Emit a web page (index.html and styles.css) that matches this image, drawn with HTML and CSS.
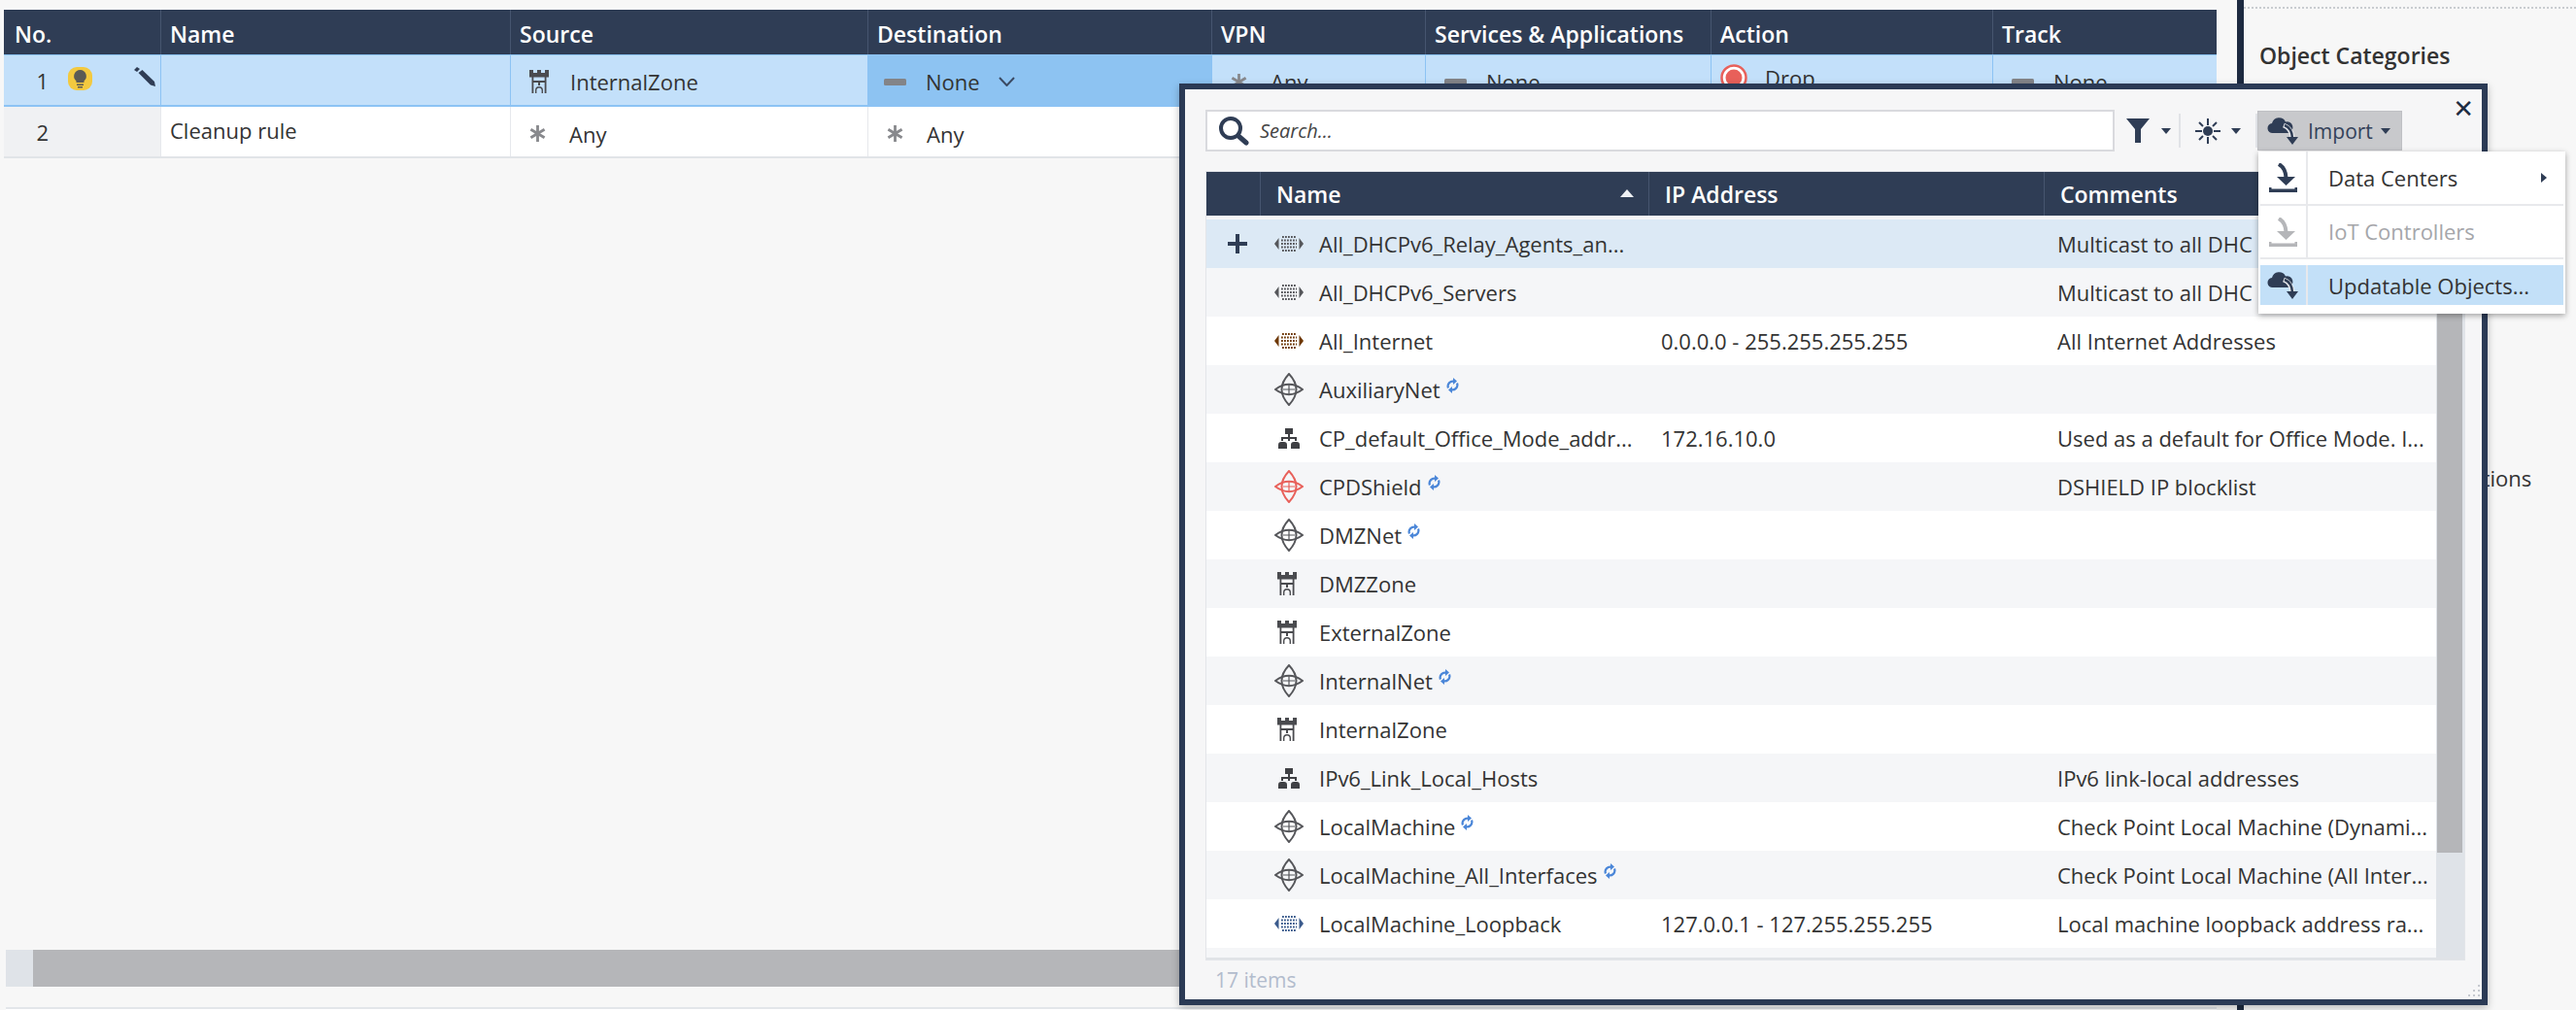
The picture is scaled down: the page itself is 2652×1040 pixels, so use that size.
FILE: index.html
```html
<!DOCTYPE html>
<html lang="en">
  <head>
    <meta charset="UTF-8" />
    <title>Access Control Policy</title>
    <link rel="stylesheet" href="styles.css">
  </head>
  <body>
    <!-- icon set -->
    <svg class="sprites" width="0" height="0">
      <symbol id="i-zone" viewBox="0 0 20 24">
        <path fill="currentColor" d="M0 0h4v3h4V0h4v3h4V0h4v7.500H0z" />
        <path fill="currentColor" d="M2.500 7h1.800v17H2.500zM15.700 7h1.800v17h-1.800zM2.500 11h15v2H2.500zM9 13h2v3H9z" />
        <path fill="none" stroke="currentColor" stroke-width="1.400" d="M6.700 24v-3a3.300 3.300 0 0 1 6.600 0v3" />
      </symbol>
      <symbol id="i-any" viewBox="0 0 18 20">
        <path fill="none" stroke="currentColor" stroke-width="3" d="M9 1v18M1.500 5.500l15 9M16.500 5.500l-15 9" />
      </symbol>
      <symbol id="i-none" viewBox="0 0 23 7">
        <rect width="23" height="7" rx="1.500" fill="currentColor" />
      </symbol>
      <symbol id="i-net" viewBox="0 0 30 34">
        <g fill="none" stroke="currentColor" stroke-width="1.900">
          <path d="M1 17Q15 6.500 29 17Q15 27.500 1 17Z" />
          <path d="M15 1Q30 17 15 33Q0 17 15 1Z" />
          <path d="M15 12v10M9 17h12" stroke-width="1.200" />
        </g>
      </symbol>
      <symbol id="i-multi" viewBox="0 0 30 16">
        <path fill="currentColor" d="M0 8l4.500-6v12zM30 8l-4.500-6v12z" />
        <path fill="none" stroke="currentColor" stroke-width="2" stroke-dasharray="1.800 1.200" d="M8 1h14M7 4.500h16M7 8h16M7 11.500h16M8 15h14" />
      </symbol>
      <symbol id="i-group" viewBox="0 0 22 21">
        <path fill="currentColor" d="M7 0h8v6h-3v3h7v4h-2v-2H5v2H3V9h7V6H7zM10 9h2v4h-2z" />
        <path fill="currentColor" d="M0 21v-4a3 3 0 0 1 3-3h3a3 3 0 0 1 3 3v4zM13 21v-4a3 3 0 0 1 3-3h3a3 3 0 0 1 3 3v4z" />
      </symbol>
      <symbol id="i-sync" viewBox="0 0 13 16">
        <g fill="none" stroke="currentColor" stroke-width="2.200">
          <path d="M2 10.500A5 5 0 0 1 8.500 4" />
          <path d="M11 5.500A5 5 0 0 1 4.500 12" />
        </g>
        <path fill="currentColor" d="M7 0l4 3.600L7 7zM6 9l-4 3.400L6 16z" />
      </symbol>
      <symbol id="i-cloud" viewBox="0 0 33 30">
        <path fill="currentColor" d="M6 17a5 5 0 0 1-1-10a7.500 7.500 0 0 1 14-1.500a5.500 5.500 0 0 1 3 11.500z" />
        <path fill="none" stroke="#e8e9ec" stroke-width="5" d="M17 9q8 3 9 13" />
        <path fill="none" stroke="currentColor" stroke-width="2.500" d="M18 9q7.500 3 8 13" />
        <path fill="currentColor" d="M20 21h12l-6 8z" />
      </symbol>
      <symbol id="i-download" viewBox="0 0 29 30">
        <path fill="none" stroke="currentColor" stroke-width="4" d="M10 1q7 4 7.500 14" />
        <path fill="currentColor" d="M8 14h19l-9.500 9zM0 25h2.500v1.500H26.500V25H29v5H0z" />
      </symbol>
      <symbol id="i-funnel" viewBox="0 0 24 25">
        <path fill="currentColor" d="M0 0h24L15 11v14H9V11z" />
      </symbol>
      <symbol id="i-star" viewBox="0 0 26 26">
        <circle cx="13" cy="13" r="5" fill="currentColor" />
        <path fill="none" stroke="currentColor" stroke-width="2" d="M13 0v7M13 19v7M0 13h7M19 13h7M4 4l4 4M18 18l4 4M22 4l-4 4M8 18l-4 4" />
      </symbol>
      <symbol id="i-search" viewBox="0 0 31 30">
        <circle cx="12" cy="12" r="10" fill="none" stroke="currentColor" stroke-width="4" />
        <path stroke="currentColor" stroke-width="5" stroke-linecap="round" d="M20 20l8 7" />
      </symbol>
      <symbol id="i-bulb" viewBox="0 0 25 24">
        <rect width="25" height="24" rx="9" fill="#f3c93f" />
        <path fill="#5a5a55" d="M12.500 3a6.500 6.500 0 0 0-4 11.500V16h8v-1.500a6.500 6.500 0 0 0-4-11.500z" />
        <path fill="#5a5a55" d="M9 17.500h7v1.500H9zM10 20h5v1.500h-5z" />
      </symbol>
      <symbol id="i-pencil" viewBox="0 0 22 20">
        <path fill="#2f3d55" d="M0 3L3 0l3 2-3 3zM4.500 6l4-3L21 15l1 5-5-1.500z" />
      </symbol>
      <symbol id="i-drop" viewBox="0 0 28 28">
        <circle cx="14" cy="14" r="12.500" fill="#fff" stroke="#e8605a" stroke-width="2.500" />
        <circle cx="14" cy="14" r="8.500" fill="#e8605a" />
      </symbol>
    </svg>

    <div class="page">
      <main class="policy">
        <div class="rules">
          <div class="rule-row rule-head">
            <div class="cell">No.</div>
            <div class="cell">Name</div>
            <div class="cell">Source</div>
            <div class="cell">Destination</div>
            <div class="cell">VPN</div>
            <div class="cell">Services &amp; Applications</div>
            <div class="cell">Action</div>
            <div class="cell">Track</div>
          </div>
          <div class="rule-row rule-selected">
            <div class="cell cell-no">
              <span class="no-val">1</span>
              <svg class="ic-bulb"><use href="#i-bulb" /></svg>
              <svg class="ic-pencil"><use href="#i-pencil" /></svg>
            </div>
            <div class="cell"></div>
            <div class="cell"><svg class="ic-zone"><use href="#i-zone" /></svg>InternalZone</div>
            <div class="cell cell-active">
              <svg class="ic-none"><use href="#i-none" /></svg>None
              <svg class="ic-chevron" viewBox="0 0 17 10"><path d="M1 1l7.500 8L16 1" /></svg>
            </div>
            <div class="cell"><svg class="ic-any"><use href="#i-any" /></svg>Any</div>
            <div class="cell"><svg class="ic-none"><use href="#i-none" /></svg>None</div>
            <div class="cell cell-raised"><svg class="ic-drop"><use href="#i-drop" /></svg>Drop</div>
            <div class="cell"><svg class="ic-none"><use href="#i-none" /></svg>None</div>
          </div>
          <div class="rule-row rule-plain">
            <div class="cell cell-no cell-grey"><span class="no-val">2</span></div>
            <div class="cell cell-raised">Cleanup rule</div>
            <div class="cell"><svg class="ic-any"><use href="#i-any" /></svg>Any</div>
            <div class="cell"><svg class="ic-any"><use href="#i-any" /></svg>Any</div>
            <div class="cell"></div>
            <div class="cell"></div>
            <div class="cell"></div>
            <div class="cell"></div>
          </div>
        </div>
        <div class="h-scroll"><div class="h-thumb"></div></div>
        <div class="bottom-panel"></div>
      </main>

      <div class="divider"></div>

      <aside class="side">
        <h2 class="side-title">Object Categories</h2>
        <div class="side-item">ctions</div>
      </aside>
    </div>

    <!-- object picker -->
    <section class="picker">
      <span class="picker-close">✕</span>
      <div class="toolbar">
        <div class="search">
          <svg class="ic-search"><use href="#i-search" /></svg>
          <span class="search-text">Search...</span>
        </div>
        <svg class="ic-funnel"><use href="#i-funnel" /></svg>
        <span class="caret caret-funnel"></span>
        <span class="tool-sep sep-funnel"></span>
        <svg class="ic-star"><use href="#i-star" /></svg>
        <span class="caret caret-star"></span>
        <span class="tool-sep sep-star"></span>
        <div class="import">
          <svg class="ic-cloud"><use href="#i-cloud" /></svg>
          <span class="import-label">Import</span>
          <span class="caret caret-import"></span>
          <div class="menu">
            <div class="menu-item">
              <span class="menu-icon"><svg class="ic-download"><use href="#i-download" /></svg></span>
              <span class="menu-label">Data Centers</span>
              <span class="menu-arrow"></span>
            </div>
            <div class="menu-item menu-disabled">
              <span class="menu-icon"><svg class="ic-download"><use href="#i-download" /></svg></span>
              <span class="menu-label">IoT Controllers</span>
            </div>
            <div class="menu-item menu-hover">
              <span class="menu-icon"><svg class="ic-cloud"><use href="#i-cloud" /></svg></span>
              <span class="menu-label">Updatable Objects...</span>
            </div>
          </div>
        </div>
      </div>

      <div class="objects">
        <div class="obj-row obj-head">
          <div class="obj-cell"></div>
          <div class="obj-cell obj-name-head">Name<span class="sort-up"></span></div>
          <div class="obj-cell">IP Address</div>
          <div class="obj-cell obj-comments-head">Comments</div>
        </div>
        <div class="obj-body">
          <div class="obj-rows">
            <div class="obj-row row-hover">
              <div class="obj-add"><svg class="ic-plus" viewBox="0 0 20 20"><path d="M8 0h4v8h8v4h-8v8H8v-8H0V8h8z" /></svg></div>
              <div class="obj-name"><span class="obj-icon"><svg class="ic-multi"><use href="#i-multi" /></svg></span>All_DHCPv6_Relay_Agents_an...</div>
              <div class="obj-ip"></div>
              <div class="obj-note">Multicast to all DHC</div>
            </div>
            <div class="obj-row">
              <div class="obj-add"></div>
              <div class="obj-name"><span class="obj-icon"><svg class="ic-multi"><use href="#i-multi" /></svg></span>All_DHCPv6_Servers</div>
              <div class="obj-ip"></div>
              <div class="obj-note">Multicast to all DHC</div>
            </div>
            <div class="obj-row">
              <div class="obj-add"></div>
              <div class="obj-name"><span class="obj-icon"><svg class="ic-multi ic-brown"><use href="#i-multi" /></svg></span>All_Internet</div>
              <div class="obj-ip">0.0.0.0 - 255.255.255.255</div>
              <div class="obj-note">All Internet Addresses</div>
            </div>
            <div class="obj-row">
              <div class="obj-add"></div>
              <div class="obj-name"><span class="obj-icon"><svg class="ic-net"><use href="#i-net" /></svg></span>AuxiliaryNet<svg class="ic-sync"><use href="#i-sync" /></svg></div>
              <div class="obj-ip"></div>
              <div class="obj-note"></div>
            </div>
            <div class="obj-row">
              <div class="obj-add"></div>
              <div class="obj-name"><span class="obj-icon"><svg class="ic-group"><use href="#i-group" /></svg></span>CP_default_Office_Mode_addr...</div>
              <div class="obj-ip">172.16.10.0</div>
              <div class="obj-note">Used as a default for Office Mode. I...</div>
            </div>
            <div class="obj-row">
              <div class="obj-add"></div>
              <div class="obj-name"><span class="obj-icon"><svg class="ic-net ic-red"><use href="#i-net" /></svg></span>CPDShield<svg class="ic-sync"><use href="#i-sync" /></svg></div>
              <div class="obj-ip"></div>
              <div class="obj-note">DSHIELD IP blocklist</div>
            </div>
            <div class="obj-row">
              <div class="obj-add"></div>
              <div class="obj-name"><span class="obj-icon"><svg class="ic-net"><use href="#i-net" /></svg></span>DMZNet<svg class="ic-sync"><use href="#i-sync" /></svg></div>
              <div class="obj-ip"></div>
              <div class="obj-note"></div>
            </div>
            <div class="obj-row">
              <div class="obj-add"></div>
              <div class="obj-name"><span class="obj-icon"><svg class="ic-zone"><use href="#i-zone" /></svg></span>DMZZone</div>
              <div class="obj-ip"></div>
              <div class="obj-note"></div>
            </div>
            <div class="obj-row">
              <div class="obj-add"></div>
              <div class="obj-name"><span class="obj-icon"><svg class="ic-zone"><use href="#i-zone" /></svg></span>ExternalZone</div>
              <div class="obj-ip"></div>
              <div class="obj-note"></div>
            </div>
            <div class="obj-row">
              <div class="obj-add"></div>
              <div class="obj-name"><span class="obj-icon"><svg class="ic-net"><use href="#i-net" /></svg></span>InternalNet<svg class="ic-sync"><use href="#i-sync" /></svg></div>
              <div class="obj-ip"></div>
              <div class="obj-note"></div>
            </div>
            <div class="obj-row">
              <div class="obj-add"></div>
              <div class="obj-name"><span class="obj-icon"><svg class="ic-zone"><use href="#i-zone" /></svg></span>InternalZone</div>
              <div class="obj-ip"></div>
              <div class="obj-note"></div>
            </div>
            <div class="obj-row">
              <div class="obj-add"></div>
              <div class="obj-name"><span class="obj-icon"><svg class="ic-group"><use href="#i-group" /></svg></span>IPv6_Link_Local_Hosts</div>
              <div class="obj-ip"></div>
              <div class="obj-note">IPv6 link-local addresses</div>
            </div>
            <div class="obj-row">
              <div class="obj-add"></div>
              <div class="obj-name"><span class="obj-icon"><svg class="ic-net"><use href="#i-net" /></svg></span>LocalMachine<svg class="ic-sync"><use href="#i-sync" /></svg></div>
              <div class="obj-ip"></div>
              <div class="obj-note">Check Point Local Machine (Dynami...</div>
            </div>
            <div class="obj-row">
              <div class="obj-add"></div>
              <div class="obj-name"><span class="obj-icon"><svg class="ic-net"><use href="#i-net" /></svg></span>LocalMachine_All_Interfaces<svg class="ic-sync"><use href="#i-sync" /></svg></div>
              <div class="obj-ip"></div>
              <div class="obj-note">Check Point Local Machine (All Inter...</div>
            </div>
            <div class="obj-row">
              <div class="obj-add"></div>
              <div class="obj-name"><span class="obj-icon"><svg class="ic-multi ic-blue"><use href="#i-multi" /></svg></span>LocalMachine_Loopback</div>
              <div class="obj-ip">127.0.0.1 - 127.255.255.255</div>
              <div class="obj-note">Local machine loopback address ra...</div>
            </div>
            <div class="obj-row obj-cut">
              <div class="obj-add"></div>
              <div class="obj-name"><span class="obj-icon"><svg class="ic-zone"><use href="#i-zone" /></svg></span></div>
              <div class="obj-ip"></div>
              <div class="obj-note"></div>
            </div>
          </div>
          <div class="v-scroll"><div class="v-thumb"></div></div>
        </div>
      </div>
      <div class="picker-foot">17 items</div>
      <svg class="grip" viewBox="0 0 15 15"><path d="M12 1h2v2h-2zM7 6h2v2H7zM12 6h2v2h-2zM2 11h2v2H2zM7 11h2v2H7zM12 11h2v2h-2z" /></svg>
    </section>
  </body>
</html>
```

FILE: styles.css
```css
* {
  box-sizing: border-box;
}

html,
body {
  margin: 0;
  height: 100%;
}

body {
  position: relative;
  width: 2652px;
  height: 1040px;
  overflow: hidden;
  background-color: #f7f7f7;
  color: #333;
  font-family: "Open Sans", "Noto Sans", sans-serif;
  font-size: 22px;
}

svg {
  display: block;
  flex: none;
}

.sprites {
  position: absolute;
}

.page {
  display: flex;
  height: 1040px;
}

/* 左侧规则表 */
.policy {
  display: flex;
  flex-direction: column;
  width: 2303px;
  padding: 8px 21px 0 4px;
}

.rules {
  border-top: 2px solid #fff;
}

.rule-row {
  display: grid;
  grid-template-columns: 161px 360px 368px 354px 220px 294px 290px 231px;
  height: 53px;
  background-color: #fff;
  border-bottom: 2px solid #e1e4e8;
}

.rule-row .cell {
  display: flex;
  align-items: center;
  padding-left: 10px;
  border-left: 1px solid #e6e8ec;
  white-space: nowrap;
}

.rule-row .cell:first-child {
  border-left: 0;
}

.rule-head {
  height: 46px;
  background-color: #2f3d55;
  color: #fff;
  font-weight: 600;
  font-size: 23px;
  border-bottom: 0;
}

.rule-head .cell {
  padding-top: 3px;
  padding-left: 9px;
  border-left-color: #46556f;
}

.rule-head .cell:first-child {
  padding-left: 11px;
}

.rule-selected {
  height: 54px;
  background-color: #c3e0fa;
  border-bottom: 2px solid #8cc3f4;
  border-top: 1px solid #8cc3f4;
}

.rule-selected .cell {
  border-left-color: #8cc3f4;
  padding-top: 3px;
  padding-left: 19px;
}

.rule-selected .cell-active {
  background-color: #8dc3f2;
  padding-left: 16px;
}

.rule-selected .cell-no {
  padding-left: 0;
  padding-top: 0;
}

.rule-selected .cell-raised {
  padding-top: 0;
  padding-bottom: 6px;
  padding-left: 9px;
}

.rule-plain .cell {
  padding-top: 4px;
  padding-left: 19px;
}

.rule-plain .cell-no {
  padding-top: 0;
  padding-left: 0;
}

.rule-plain .cell-raised {
  padding-top: 0;
  padding-left: 9px;
  padding-bottom: 3px;
}

.cell-grey {
  background-color: #f0f1f3;
}

.no-val {
  width: 66px;
  padding-right: 20px;
  text-align: right;
}

.cell-no .ic-bulb {
  width: 25px;
  height: 24px;
  margin-top: -4px;
}

.cell-no .ic-pencil {
  width: 22px;
  height: 20px;
  margin-left: 43px;
  margin-top: -8px;
}

.ic-zone {
  width: 20px;
  height: 24px;
  color: #4a4b4f;
  margin-right: 22px;
}

.ic-any {
  width: 17px;
  height: 19px;
  color: #88898d;
  margin-right: 24px;
}

.ic-none {
  width: 23px;
  height: 7px;
  color: #838488;
  margin-right: 20px;
}

.ic-chevron {
  width: 17px;
  height: 10px;
  margin-left: 19px;
  fill: none;
  stroke: #3b4a63;
  stroke-width: 2;
}

.ic-drop {
  width: 28px;
  height: 28px;
  margin-right: 18px;
}

/* 底部滚动条 */
.h-scroll {
  display: flex;
  height: 38px;
  margin-top: auto;
  margin-left: 2px;
  margin-right: -2px;
  background-color: #dfe3e8;
}

.h-thumb {
  flex: 1;
  margin-left: 28px;
  background-color: #b5b6b9;
}

.bottom-panel {
  height: 3px;
  margin-top: 21px;
  margin-left: 2px;
  background-color: #fff;
  border-top: 2px solid #e3e6ea;
}

.divider {
  width: 7px;
  background-color: #1d2a40;
}

/* 右侧面板 */
.side {
  flex: 1;
  margin-top: 7px;
  padding: 0 0 0 16px;
  border-top: 2px dotted #c9ccd0;
}

.side-title {
  margin: 32px 0 0;
  font-size: 23px;
  font-weight: 600;
}

.side-item {
  margin-top: 404px;
  padding-left: 219px;
  white-space: nowrap;
}

/* 对象选择弹窗 */
.picker {
  position: absolute;
  left: 1214px;
  top: 86px;
  width: 1347px;
  height: 949px;
  padding: 21px 26px 0 21px;
  background-color: #f6f6f7;
  border: 6px solid #2b3a55;
  box-shadow: 0 3px 8px rgba(0, 0, 0, 0.25);
}

.picker-close {
  position: absolute;
  right: 8px;
  top: 8px;
  color: #1f2c42;
  font-family: "DejaVu Sans", sans-serif;
  font-size: 26px;
  font-weight: 700;
  line-height: 24px;
}

.toolbar {
  display: flex;
  align-items: center;
  height: 43px;
}

.search {
  display: flex;
  align-items: center;
  width: 936px;
  height: 43px;
  padding-left: 12px;
  background-color: #fff;
  border: 2px solid #d9dade;
}

.ic-search {
  width: 31px;
  height: 30px;
  color: #2f3d55;
  margin-right: 11px;
}

.search-text {
  font-size: 20px;
  font-style: italic;
  color: #444;
}

.ic-funnel {
  width: 24px;
  height: 25px;
  color: #2f3d55;
  margin-left: 12px;
}

.ic-star {
  width: 26px;
  height: 26px;
  color: #2f3d55;
}

.caret {
  width: 0;
  height: 0;
  border-left: 5px solid transparent;
  border-right: 5px solid transparent;
  border-top: 6px solid #2f3d55;
}

.caret-funnel {
  margin-left: 12px;
}

.caret-star {
  margin-left: 11px;
}

.caret-import {
  margin-left: 8px;
}

.tool-sep {
  width: 2px;
  height: 35px;
  background-color: #e1e3e7;
}

.sep-funnel {
  margin: 0 15px 0 8px;
}

.sep-star {
  margin: 0 0 0 15px;
}

.import {
  position: relative;
  display: flex;
  align-items: center;
  width: 149px;
  height: 41px;
  padding-left: 9px;
  background-color: #c8c9cc;
  border: 1px solid #bfc0c4;
  color: #34425a;
}

.import .ic-cloud {
  width: 33px;
  height: 30px;
  color: #2f3d55;
  margin-right: 9px;
}

.import-label {
  font-size: 21px;
}

.menu {
  position: absolute;
  left: 0;
  top: 41px;
  z-index: 5;
  width: 316px;
  height: 167px;
  padding: 0 2px;
  background-color: #fff;
  color: #333;
  box-shadow: 0 2px 6px rgba(0, 0, 0, 0.35);
}

.menu-item {
  display: flex;
  align-items: center;
  height: 56px;
  border-bottom: 2px solid #e8e9ec;
}

.menu-item:nth-child(2) {
  height: 55px;
}

.menu-hover {
  height: 41px;
  margin-top: 6px;
  border-bottom: 0;
  background-color: #c3e0f8;
}

.menu-icon {
  display: flex;
  align-items: center;
  justify-content: center;
  align-self: stretch;
  width: 49px;
  border-right: 2px solid #e8e9ec;
}

.menu-label {
  padding-left: 21px;
}

.menu-disabled .menu-label {
  margin-top: -2px;
}

.menu-arrow {
  width: 0;
  height: 0;
  margin-left: 86px;
  border-top: 5px solid transparent;
  border-bottom: 5px solid transparent;
  border-left: 6px solid #2f3d55;
}

.ic-download {
  width: 29px;
  height: 30px;
  color: #2f3d55;
}

.menu-disabled {
  color: #a5a6aa;
}

.menu-disabled .ic-download {
  color: #b5b6b9;
}

.menu-hover .ic-cloud {
  width: 33px;
  height: 30px;
  color: #2f3d55;
  margin: 0;
}

.objects {
  width: 1295px;
  margin-top: 21px;
  margin-left: 1px;
  box-shadow: 0 0 0 1px #e3e5e9;
  border-bottom: 2px solid #e0e3e7;
}

.obj-row {
  display: grid;
  grid-template-columns: 55px 400px 407px 1fr;
  align-items: center;
  height: 50px;
  background-color: #fff;
  white-space: nowrap;
}

.obj-rows {
  flex: 1;
  overflow: hidden;
}

.obj-rows .obj-row:nth-child(even) {
  background-color: #f5f6f8;
}

.obj-rows .row-hover {
  background-color: #dce9f5;
}

.obj-head {
  height: 45px;
  align-items: stretch;
  background-color: #2f3d55;
  color: #fff;
  font-size: 23px;
  font-weight: 600;
}

.obj-head .obj-cell {
  display: flex;
  align-items: center;
  padding-left: 16px;
  border-left: 1px solid #46556f;
}

.obj-head .obj-cell:first-child {
  border-left: 0;
}

.obj-name-head {
  position: relative;
}

.sort-up {
  position: absolute;
  right: 15px;
  top: 18px;
  width: 0;
  height: 0;
  border-left: 7px solid transparent;
  border-right: 7px solid transparent;
  border-bottom: 8px solid #eef0f3;
}

.obj-body {
  display: flex;
  height: 764px;
  padding-top: 4px;
  background-color: #f6f6f7;
}

.obj-add {
  display: flex;
  justify-content: center;
  padding-left: 8px;
}

.ic-plus {
  width: 20px;
  height: 20px;
  fill: #2f3d55;
}

.obj-name {
  display: flex;
  align-items: center;
  padding-left: 15px;
}

.obj-icon {
  display: flex;
  justify-content: center;
  width: 30px;
  margin-right: 16px;
}

.obj-icon .ic-zone {
  margin-right: 0;
  margin-left: -5px;
}

.ic-multi {
  width: 30px;
  height: 16px;
  color: #55565a;
}

.ic-brown {
  color: #6e3806;
}

.ic-blue {
  color: #3a5a8c;
}

.ic-net {
  width: 30px;
  height: 34px;
  color: #55565a;
}

.ic-red {
  color: #e8605a;
}

.ic-group {
  width: 22px;
  height: 21px;
  color: #3f4044;
}

.ic-sync {
  width: 13px;
  height: 16px;
  margin: -8px 0 0 6px;
  color: #4a86d8;
}

.obj-ip {
  padding-left: 13px;
}

.obj-note {
  padding-left: 14px;
  overflow: hidden;
}

.obj-cut {
  overflow: hidden;
}

.v-scroll {
  width: 29px;
  background-color: #dfe3e8;
}

.v-thumb {
  width: 26px;
  height: 652px;
  margin-left: 1px;
  background-color: #b5b6b9;
}

.picker-foot {
  margin: 9px 0 0 10px;
  font-size: 21px;
  color: #b3bccd;
  line-height: 24px;
}

.grip {
  position: absolute;
  right: 1px;
  bottom: 1px;
  width: 15px;
  height: 15px;
  fill: #c5c8cf;
}
```
